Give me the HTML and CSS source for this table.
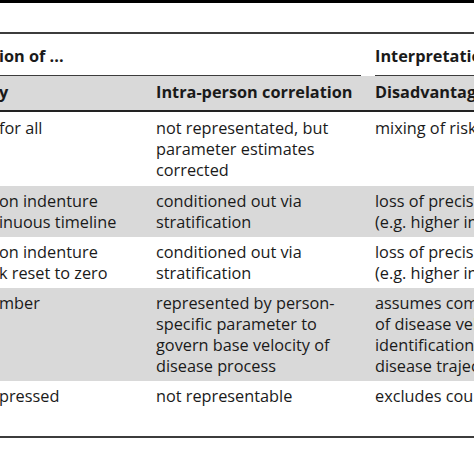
FILE: index.html
```html
<!DOCTYPE html>
<html>
<head>
<meta charset="utf-8">
<link rel="stylesheet" href="styles.css">
</head>
<body>
<div class="page">
  <div class="topbar"></div>
  <div class="table">
    <div class="row group">
      <div class="cell span2"><span class="clip">ion of ...</span></div>
      <div class="cell">Interpretation</div>
    </div>
    <div class="row head">
      <div class="cell"><span class="clip">y</span></div>
      <div class="cell">Intra-person correlation</div>
      <div class="cell">Disadvantages</div>
    </div>
    <div class="row first">
      <div class="cell"><span class="clip">for all</span></div>
      <div class="cell">not representated, but<br>parameter estimates<br>corrected</div>
      <div class="cell">mixing of risk sets</div>
    </div>
    <div class="row shade">
      <div class="cell"><span class="clip">on indenture<br>inuous timeline</span></div>
      <div class="cell">conditioned out via<br>stratification</div>
      <div class="cell">loss of precision<br>(e.g. higher intervals)</div>
    </div>
    <div class="row">
      <div class="cell"><span class="clip">on indenture<br>k reset to zero</span></div>
      <div class="cell">conditioned out via<br>stratification</div>
      <div class="cell">loss of precision<br>(e.g. higher intervals)</div>
    </div>
    <div class="row shade">
      <div class="cell"><span class="clip">mber</span></div>
      <div class="cell">represented by person-<br>specific parameter to<br>govern base velocity of<br>disease process</div>
      <div class="cell">assumes common<br>of disease velocity<br>identification of<br>disease trajectories</div>
    </div>
    <div class="row last">
      <div class="cell"><span class="clip">pressed</span></div>
      <div class="cell">not representable</div>
      <div class="cell">excludes counts</div>
    </div>
  </div>
</div>
</body>
</html>
```

FILE: styles.css
```css
html, body {
  margin: 0;
  padding: 0;
  background: #ffffff;
}
.page {
  width: 474px;
  height: 474px;
  overflow: hidden;
  font-family: "Open Sans", "Noto Sans", sans-serif;
  font-size: 16.3px;
  color: #1a1a1a;
}
.topbar {
  height: 3px;
  background: #000;
}
.table {
  margin-top: 29px;
  border-top: 2px solid #3c3c3c;
  border-bottom: 2px solid #3c3c3c;
}
.row {
  display: grid;
  grid-template-columns: 142px 205px 1fr;
  column-gap: 14px;
  line-height: 21px;
}
.cell {
  white-space: nowrap;
  overflow: hidden;
  padding: 4.5px 0 4.5px;
}
.clip {
  display: block;
  margin-left: -1px;
}
.group .cell {
  font-weight: 700;
  padding: 12px 0 7.5px;
  border-bottom: 1.5px solid #3c3c3c;
}
.span2 {
  grid-column: 1 / span 2;
}
.head {
  background: #d9d9d9;
  border-bottom: 2px solid #222;
}
.head .cell {
  font-weight: 700;
  padding: 6px 0 7.5px;
}
.first .cell {
  padding: 5.5px 0 5.5px;
}
.shade {
  background: #d9d9d9;
}
.last .cell {
  padding-bottom: 29.5px;
}
```
